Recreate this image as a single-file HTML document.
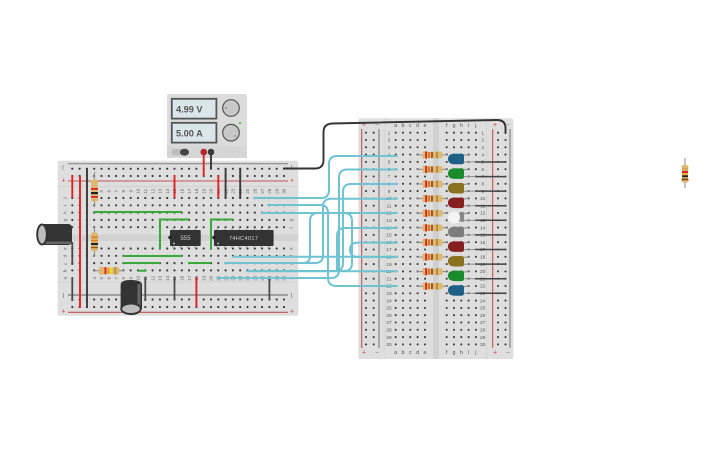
<!DOCTYPE html>
<html><head><meta charset="utf-8"><style>
html,body{margin:0;padding:0;background:#fff;width:725px;height:453px;overflow:hidden}
svg{display:block;filter:blur(.3px)}
text{font-family:"Liberation Sans",sans-serif}
.n{font-size:4.6px;fill:#666;text-anchor:middle;transform-box:fill-box;transform-origin:center;transform:rotate(-90deg)}
.l{font-size:5.5px;fill:#555;text-anchor:middle}
.m{font-size:4.8px;fill:#555;text-anchor:middle}
.d{fill:none;stroke:#3c3c3c;stroke-width:2.2;stroke-linecap:round;stroke-dasharray:0 7.3}
.w{fill:none;stroke:#6fc3d2;stroke-width:2;stroke-linecap:round}
.g{fill:none;stroke:#3aa83a;stroke-width:2}
.r{fill:none;stroke:#e02222;stroke-width:1.9}
.k{fill:none;stroke:#3a3a3a;stroke-width:1.9}
</style></head><body>
<svg width="725" height="453" viewBox="0 0 725 453" xmlns="http://www.w3.org/2000/svg">
<defs>
<g id="res">
<line x1="417" x2="447" y1="0" y2="0" stroke="#8d8d8d" stroke-width="1.1"/>
<path d="M423 -3.5 Q426 -4 428 -3 H436 Q439 -4 442 -3 Q443.5 0 442 3 Q439 4 436 3 H428 Q426 4 423 3.5 Q421.5 0 423 -3.5Z" fill="#dcb870"/>
<rect x="425.2" y="-3.6" width="1.8" height="7.2" fill="#e02020"/>
<rect x="428.2" y="-3.1" width="1.6" height="6.2" fill="#d06a20"/>
<rect x="431.2" y="-3.1" width="1.6" height="6.2" fill="#a03a20"/>
<rect x="436.2" y="-3.4" width="1.6" height="6.8" fill="#a98238"/>
</g>
<g id="ledl">
<path d="M463 -3.6 L468.6 -4.4 M463 3 L476 2.9" stroke="#8d8d8d" stroke-width="1" fill="none"/>
</g>
</defs>

<!-- power supply -->
<rect x="167" y="94" width="80" height="64" rx="2" fill="#dcdcdc"/>
<rect x="167" y="146" width="80" height="12" rx="1" fill="#d6d6d6"/>
<rect x="171.8" y="98.8" width="44.6" height="19.8" fill="#dbe6ea" stroke="#555" stroke-width="1.8"/>
<rect x="171.8" y="122.8" width="44.6" height="19.8" fill="#dbe6ea" stroke="#555" stroke-width="1.8"/>
<text x="176" y="112.5" font-size="9.2" font-weight="bold" fill="#555">4.99 V</text>
<text x="176" y="136.5" font-size="9.2" font-weight="bold" fill="#555">5.00 A</text>
<circle cx="231" cy="108" r="8.3" fill="#c8c8c8" stroke="#555" stroke-width="1.2"/>
<circle cx="231" cy="132.7" r="8.3" fill="#c8c8c8" stroke="#555" stroke-width="1.2"/>
<circle cx="226" cy="108" r=".7" fill="#666"/><circle cx="235" cy="136" r=".7" fill="#666"/>
<circle cx="240" cy="123" r="1.2" fill="#5fc85f"/>
<rect x="171.5" y="149" width="17.5" height="6.4" rx="3.2" fill="#bcbcbc"/>
<ellipse cx="184.5" cy="152.2" rx="4.5" ry="3.4" fill="#444"/>
<text x="229" y="154" font-size="4.5" fill="#c8c8c8">227 #</text>

<!-- left board -->
<rect x="57.7" y="160.7" width="240.6" height="155" rx="2" fill="#dedede"/>
<rect x="57.7" y="234.5" width="240.6" height="6.5" fill="#d2d2d2"/>
<rect x="57.7" y="186" width="240.6" height=".8" fill="#cfcfcf"/>
<rect x="57.7" y="281.5" width="240.6" height=".8" fill="#cfcfcf"/>
<line x1="68" x2="288" y1="163.7" y2="163.7" stroke="#8a8a8a" stroke-width="1.2"/>
<line x1="68" x2="288" y1="181" y2="181" stroke="#c05555" stroke-width="1.1"/>
<line x1="68" x2="288" y1="295" y2="295" stroke="#8a8a8a" stroke-width="1.6"/>
<line x1="68" x2="288" y1="312.3" y2="312.3" stroke="#c05555" stroke-width="1.1"/>
<text class="l" x="63" y="169" fill="#555">|</text><text class="l" x="291.5" y="169">|</text>
<text x="63.5" y="182.5" font-size="7" fill="#d04040" text-anchor="middle">+</text><text x="292" y="182.5" font-size="7" fill="#d04040" text-anchor="middle">+</text>
<text class="l" x="63.5" y="297">|</text><text class="l" x="291.5" y="297">|</text>
<text x="63.5" y="313.5" font-size="7" fill="#d04040" text-anchor="middle">+</text><text x="292" y="313.5" font-size="7" fill="#d04040" text-anchor="middle">+</text>
<g>
<text class="n" x="65" y="200">j</text><text class="n" x="65" y="207">i</text><text class="n" x="65" y="214">h</text><text class="n" x="65" y="221.5">g</text><text class="n" x="65" y="229">f</text>
<text class="n" x="65" y="250">e</text><text class="n" x="65" y="257.5">d</text><text class="n" x="65" y="265">c</text><text class="n" x="65" y="272">b</text><text class="n" x="65" y="279.5">a</text>
<text class="n" x="291" y="200">j</text><text class="n" x="291" y="207">i</text><text class="n" x="291" y="214">h</text><text class="n" x="291" y="221.5">g</text><text class="n" x="291" y="229">f</text>
<text class="n" x="291" y="250">e</text><text class="n" x="291" y="257.5">d</text><text class="n" x="291" y="265">c</text><text class="n" x="291" y="272">b</text><text class="n" x="291" y="279.5">a</text>
</g>
<path class="d" d="M72.3 168.7H284.1M72.3 176H284.1M72.3 198H284.1M72.3 205.3H284.1M72.3 212.6H284.1M72.3 219.9H284.1M72.3 227.2H284.1M72.3 248.5H284.1M72.3 255.8H284.1M72.3 263.1H284.1M72.3 270.4H284.1M72.3 299.5H284.1M72.3 307H284.1"/>
<g>
<text class="n" x="101.5" y="192.5">5</text><text class="n" x="108.8" y="192.5">6</text><text class="n" x="116.1" y="192.5">7</text><text class="n" x="123.4" y="192.5">8</text><text class="n" x="130.7" y="192.5">9</text><text class="n" x="138" y="192.5">10</text><text class="n" x="145.3" y="192.5">11</text><text class="n" x="152.6" y="192.5">12</text><text class="n" x="159.9" y="192.5">13</text><text class="n" x="167.2" y="192.5">14</text><text class="n" x="174.5" y="192.5">15</text><text class="n" x="181.8" y="192.5">16</text><text class="n" x="189.1" y="192.5">17</text><text class="n" x="196.4" y="192.5">18</text><text class="n" x="203.7" y="192.5">19</text><text class="n" x="211" y="192.5">20</text><text class="n" x="218.3" y="192.5">21</text><text class="n" x="225.6" y="192.5">22</text><text class="n" x="232.9" y="192.5">23</text><text class="n" x="240.2" y="192.5">24</text><text class="n" x="247.5" y="192.5">25</text><text class="n" x="254.8" y="192.5">26</text><text class="n" x="262.1" y="192.5">27</text><text class="n" x="269.4" y="192.5">28</text><text class="n" x="276.7" y="192.5">29</text><text class="n" x="284" y="192.5">30</text>
<text class="n" x="94.2" y="279.5">4</text><text class="n" x="101.5" y="279.5">5</text><text class="n" x="108.8" y="279.5">6</text><text class="n" x="116.1" y="279.5">7</text><text class="n" x="123.4" y="279.5">8</text><text class="n" x="130.7" y="279.5">9</text><text class="n" x="138" y="279.5">10</text><text class="n" x="145.3" y="279.5">11</text><text class="n" x="152.6" y="279.5">12</text><text class="n" x="159.9" y="279.5">13</text><text class="n" x="167.2" y="279.5">14</text><text class="n" x="174.5" y="279.5">15</text><text class="n" x="181.8" y="279.5">16</text><text class="n" x="189.1" y="279.5">17</text><text class="n" x="196.4" y="279.5">18</text><text class="n" x="203.7" y="279.5">19</text><text class="n" x="211" y="279.5">20</text><text class="n" x="218.3" y="279.5">21</text><text class="n" x="225.6" y="279.5">22</text><text class="n" x="232.9" y="279.5">23</text><text class="n" x="240.2" y="279.5">24</text><text class="n" x="247.5" y="279.5">25</text><text class="n" x="254.8" y="279.5">26</text><text class="n" x="262.1" y="279.5">27</text><text class="n" x="269.4" y="279.5">28</text><text class="n" x="276.7" y="279.5">29</text><text class="n" x="284" y="279.5">30</text>
</g>

<!-- right board -->
<rect x="358.3" y="118.3" width="155" height="240.7" rx="2" fill="#dedede"/>
<rect x="433" y="118.3" width="6" height="240.7" fill="#d0d0d0"/>
<rect x="384.5" y="118.3" width=".8" height="240.7" fill="#d2d2d2"/>
<rect x="486" y="118.3" width=".8" height="240.7" fill="#d2d2d2"/>
<line x1="361.7" x2="361.7" y1="129" y2="348" stroke="#c05555" stroke-width="1.1"/>
<line x1="379" x2="379" y1="129" y2="348" stroke="#8a8a8a" stroke-width="1.3"/>
<line x1="492.7" x2="492.7" y1="129" y2="348" stroke="#c05555" stroke-width="1.1"/>
<line x1="510" x2="510" y1="129" y2="348" stroke="#8a8a8a" stroke-width="1.3"/>
<path class="d" d="M366 132.7V344.5M373.7 132.7V344.5M395.7 132.7V344.5M403 132.7V344.5M410.3 132.7V344.5M417.6 132.7V344.5M425 132.7V344.5M446.7 132.7V344.5M454 132.7V344.5M461.3 132.7V344.5M468.6 132.7V344.5M475.9 132.7V344.5M498 132.7V344.5M505.5 132.7V344.5" style="stroke-width:2.1"/>
<g>
<text x="364" y="127" font-size="7" fill="#d04040" text-anchor="middle">+</text><text class="l" x="377" y="126">–</text><text x="495" y="127" font-size="7" fill="#d04040" text-anchor="middle">+</text><text class="l" x="508" y="126">–</text>
<text x="364" y="354.5" font-size="7" fill="#d04040" text-anchor="middle">+</text><text class="l" x="377" y="354">–</text><text x="495" y="354.5" font-size="7" fill="#d04040" text-anchor="middle">+</text><text class="l" x="508" y="354">–</text>
<text class="l" x="395.7" y="127">a</text><text class="l" x="403" y="127">b</text><text class="l" x="410.3" y="127">c</text><text class="l" x="417.6" y="127">d</text><text class="l" x="425" y="127">e</text><text class="l" x="446.7" y="127">f</text><text class="l" x="454" y="127">g</text><text class="l" x="461.3" y="127">h</text><text class="l" x="468.6" y="127">i</text><text class="l" x="475.9" y="127">j</text>
<text class="l" x="395.7" y="354">a</text><text class="l" x="403" y="354">b</text><text class="l" x="410.3" y="354">c</text><text class="l" x="417.6" y="354">d</text><text class="l" x="425" y="354">e</text><text class="l" x="446.7" y="354">f</text><text class="l" x="454" y="354">g</text><text class="l" x="461.3" y="354">h</text><text class="l" x="468.6" y="354">i</text><text class="l" x="475.9" y="354">j</text>
</g>
<g>
<text class="m" x="389" y="134.4">1</text><text class="m" x="389" y="141.7">2</text><text class="m" x="389" y="149">3</text><text class="m" x="389" y="156.3">4</text><text class="m" x="389" y="163.6">5</text><text class="m" x="389" y="170.9">6</text><text class="m" x="389" y="178.2">7</text><text class="m" x="389" y="185.5">8</text><text class="m" x="389" y="192.8">9</text><text class="m" x="389" y="200.1">10</text><text class="m" x="389" y="207.4">11</text><text class="m" x="389" y="214.7">12</text><text class="m" x="389" y="222">13</text><text class="m" x="389" y="229.3">14</text><text class="m" x="389" y="236.6">15</text><text class="m" x="389" y="243.9">16</text><text class="m" x="389" y="251.2">17</text><text class="m" x="389" y="258.5">18</text><text class="m" x="389" y="265.8">19</text><text class="m" x="389" y="273.1">20</text><text class="m" x="389" y="280.4">21</text><text class="m" x="389" y="287.7">22</text><text class="m" x="389" y="295">23</text><text class="m" x="389" y="302.3">24</text><text class="m" x="389" y="309.6">25</text><text class="m" x="389" y="316.9">26</text><text class="m" x="389" y="324.2">27</text><text class="m" x="389" y="331.5">28</text><text class="m" x="389" y="338.8">29</text><text class="m" x="389" y="346.1">30</text>
<text class="m" x="482.7" y="134.4">1</text><text class="m" x="482.7" y="141.7">2</text><text class="m" x="482.7" y="149">3</text><text class="m" x="482.7" y="156.3">4</text><text class="m" x="482.7" y="163.6">5</text><text class="m" x="482.7" y="170.9">6</text><text class="m" x="482.7" y="178.2">7</text><text class="m" x="482.7" y="185.5">8</text><text class="m" x="482.7" y="192.8">9</text><text class="m" x="482.7" y="200.1">10</text><text class="m" x="482.7" y="207.4">11</text><text class="m" x="482.7" y="214.7">12</text><text class="m" x="482.7" y="222">13</text><text class="m" x="482.7" y="229.3">14</text><text class="m" x="482.7" y="236.6">15</text><text class="m" x="482.7" y="243.9">16</text><text class="m" x="482.7" y="251.2">17</text><text class="m" x="482.7" y="258.5">18</text><text class="m" x="482.7" y="265.8">19</text><text class="m" x="482.7" y="273.1">20</text><text class="m" x="482.7" y="280.4">21</text><text class="m" x="482.7" y="287.7">22</text><text class="m" x="482.7" y="295">23</text><text class="m" x="482.7" y="302.3">24</text><text class="m" x="482.7" y="309.6">25</text><text class="m" x="482.7" y="316.9">26</text><text class="m" x="482.7" y="324.2">27</text><text class="m" x="482.7" y="331.5">28</text><text class="m" x="482.7" y="338.8">29</text><text class="m" x="482.7" y="346.1">30</text>
</g>

<!-- chips -->
<path d="M173 228.5v2M180.3 228.5v2M187.6 228.5v2M195 228.5v2M173 246v2M180.3 246v2M187.6 246v2M195 246v2M217 228.5v2M224.5 228.5v2M232 228.5v2M239 228.5v2M246.5 228.5v2M254 228.5v2M261 228.5v2M268.5 228.5v2M217 246v2M224.5 246v2M232 246v2M239 246v2M246.5 246v2M254 246v2M261 246v2M268.5 246v2" stroke="#aaa" stroke-width="1.4"/>
<rect x="170" y="230" width="30.7" height="16" rx="1" fill="#333"/>
<rect x="214" y="230" width="59.6" height="16" rx="1" fill="#333"/>
<circle cx="170" cy="237.5" r="1.7" fill="#222"/><circle cx="214" cy="237.5" r="1.7" fill="#222"/>
<circle cx="174" cy="243.5" r=".9" fill="#ddd"/><circle cx="218" cy="243.5" r=".9" fill="#ddd"/>
<text x="185.5" y="240" font-size="6.2" fill="#cfcfcf" text-anchor="middle">555</text>
<text x="243.5" y="240" font-size="5.8" fill="#cfcfcf" text-anchor="middle" letter-spacing=".2">74HC4017</text>

<!-- green wires -->
<path class="g" d="M94 212H182M160 249V219.5H189M211 249V219.5H233.5M123 256H182M123 263H160M188 263H211M138 270.7H146.5"/>

<!-- left board wires -->
<path class="r" d="M72.3 175V198M174.5 175V198M218.3 175V198M203.7 150V176"/>
<path class="r" d="M80 176V308M196.4 277V307"/>
<path class="k" d="M87 168V308"/>
<path class="k" d="M225.6 168V198M240.2 168V198M211 151V168"/>
<path d="M72.3 242V265M72.3 277V301M145.3 277V301M174.5 277V300M269.4 277V300" fill="none" stroke="#4a4a4a" stroke-width="1.8"/>
<circle cx="203.7" cy="152" r="3.3" fill="#b8232a"/><circle cx="211" cy="152" r="3.3" fill="#3a3a3a"/>

<!-- left resistors -->
<line x1="94.5" x2="94.5" y1="172" y2="207" stroke="#8d8d8d" stroke-width="1.1"/>
<path d="M91 180.5Q94.5 178 98 180.5L97.8 186V196L98 200.5Q94.5 203 91 200.5L91.2 196V186Z" fill="#dcb870"/>
<rect x="91" y="188" width="7" height="1.8" fill="#e02020"/><rect x="91" y="192" width="7" height="2.2" fill="#222"/><rect x="91" y="196" width="7" height="1.8" fill="#e02020"/>
<line x1="94.5" x2="94.5" y1="227" y2="257" stroke="#8d8d8d" stroke-width="1.1"/>
<path d="M91 233.5Q94.5 231 98 233.5L97.8 238V247L98 250Q94.5 253 91 250L91.2 247V238Z" fill="#dcb870"/>
<rect x="91" y="236.5" width="7" height="1.6" fill="#d8841f"/><rect x="91" y="239.8" width="7" height="1.6" fill="#d8841f"/><rect x="91" y="243" width="7" height="2" fill="#222"/><rect x="91" y="246.8" width="7" height="1.4" fill="#8a5a20"/>
<line x1="94" x2="124" y1="270.7" y2="270.7" stroke="#8d8d8d" stroke-width="1.1"/>
<path d="M99.5 267Q97.5 270.7 99.5 274.5Q102 275 104 274H114Q116 275 118.5 274.5Q120.5 270.7 118.5 267Q116 266.5 114 267.5H104Q102 266.5 99.5 267Z" fill="#dcb870"/>
<rect x="104.5" y="267" width="1.8" height="7.4" fill="#e02020"/><rect x="107.5" y="267.4" width="1.7" height="6.6" fill="#f0a020"/><rect x="110.5" y="267.4" width="1.7" height="6.6" fill="#f0e020"/><rect x="114.5" y="267" width="1.5" height="7.4" fill="#b08a40"/>

<!-- capacitors -->
<path d="M42 224H68Q72 224 72 228V241Q72 245 68 245H42Z" fill="#333"/>
<path d="M44 241.5H71V244H44Z" fill="#666"/>
<ellipse cx="42" cy="234.5" rx="4.8" ry="10" fill="#bdbdbd" stroke="#333" stroke-width="1.9"/>
<path d="M120.6 285Q120.6 280 131 280Q142 280 142 285V309H120.6Z" fill="#333"/>
<path d="M137.5 284H140.5V308H137.5Z" fill="#666"/>
<ellipse cx="131" cy="308.8" rx="9.8" ry="5.2" fill="#bdbdbd" stroke="#333" stroke-width="1.9"/>

<!-- cyan wires -->
<path class="w" d="M254 198H321Q329 198 329 190V164Q329 156 337 156H397"/>
<path class="w" d="M268 205H320Q328 205 328 213V278Q328 286 337 286H397"/>
<path class="w" d="M397 169.5H347Q339 169.5 339 178V270Q339 278 331 278H217"/>
<path class="w" d="M397 184H351Q343 184 343 192V263Q343 271 335 271H247"/>
<path class="w" d="M397 198.8H331Q323 198.8 323 207V255Q323 263 315 263H225"/>
<path class="w" d="M225 263H303Q310 263 310 256V221Q310 213 318 213H344Q352 213 352 221V263Q352 271 344 271H300"/>
<path class="w" d="M262 213H397"/>
<path class="w" d="M397 228H345Q337 228 337 236V270"/>
<path class="w" d="M397 242.6H358Q350 242.6 350 249.5Q350 257 358 257H397"/>
<path class="w" d="M233 256.7H397"/>
<path class="w" d="M247 271.2H397"/>

<!-- black long wire -->
<path d="M284 168.5H315Q323.5 168.5 323.5 160V132Q323.5 124 332 123.5L497 120Q505.5 120 505.5 128V133" fill="none" stroke="#333" stroke-width="1.9" stroke-linecap="round"/>

<!-- output resistors -->
<use href="#res" y="155"/><use href="#res" y="169.4"/><use href="#res" y="184"/><use href="#res" y="198.6"/><use href="#res" y="213.2"/><use href="#res" y="227.8"/><use href="#res" y="242.4"/><use href="#res" y="257"/><use href="#res" y="271.6"/><use href="#res" y="286.2"/>

<!-- right black wires -->
<path d="M475.5 162H506M475.5 176.6H506M475.5 191.1H506M475.5 205.7H506M475.5 220.3H506M475.5 234.9H506M475.5 249.5H506M475.5 264.1H506M475.5 278.7H506M475.5 293.3H506" stroke="#444" stroke-width="1.5" fill="none"/>

<!-- LEDs -->
<use href="#ledl" y="159"/><use href="#ledl" y="173.6"/><use href="#ledl" y="188.2"/><use href="#ledl" y="202.8"/><use href="#ledl" y="217.4"/><use href="#ledl" y="232"/><use href="#ledl" y="246.6"/><use href="#ledl" y="261.2"/><use href="#ledl" y="275.8"/><use href="#ledl" y="290.4"/>
<g>
<path d="M448 159C448 155 451 153.8 455 153.8H461Q464 153.4 464 156V162Q464 164.6 461 164.3H455C451 164.3 448 163 448 159Z" fill="#1f6186"/>
<path d="M448 173.6C448 169.6 451 168.4 455 168.4H461Q464 168 464 170.6V176.6Q464 179.2 461 178.9H455C451 178.9 448 177.6 448 173.6Z" fill="#1b8a2c"/>
<path d="M448 188.2C448 184.2 451 183 455 183H461Q464 182.6 464 185.2V191.2Q464 193.8 461 193.5H455C451 193.5 448 192.2 448 188.2Z" fill="#8a7320"/>
<path d="M448 202.8C448 198.8 451 197.6 455 197.6H461Q464 197.2 464 199.8V205.8Q464 208.4 461 208.1H455C451 208.1 448 206.8 448 202.8Z" fill="#85201f"/>
<path d="M458 214L464 212L464 222L458 221Z" fill="#888"/>
<circle cx="454" cy="217.6" r="6" fill="#f4f4f4"/>
<path d="M448 232C448 228 451 226.8 455 226.8H461Q464 226.4 464 229V235Q464 237.6 461 237.3H455C451 237.3 448 236 448 232Z" fill="#7d7d7d"/>
<path d="M448 246.6C448 242.6 451 241.4 455 241.4H461Q464 241 464 243.6V249.6Q464 252.2 461 251.9H455C451 251.9 448 250.6 448 246.6Z" fill="#85201f"/>
<path d="M448 261.2C448 257.2 451 256 455 256H461Q464 255.6 464 258.2V264.2Q464 266.8 461 266.5H455C451 266.5 448 265.2 448 261.2Z" fill="#8a7320"/>
<path d="M448 275.8C448 271.8 451 270.6 455 270.6H461Q464 270.2 464 272.8V278.8Q464 281.4 461 281.1H455C451 281.1 448 279.8 448 275.8Z" fill="#1b8a2c"/>
<path d="M448 290.4C448 286.4 451 285.2 455 285.2H461Q464 284.8 464 287.4V293.4Q464 296 461 295.7H455C451 295.7 448 294.4 448 290.4Z" fill="#1f6186"/>
</g>

<!-- far right resistor -->
<line x1="685" x2="685" y1="158" y2="188" stroke="#a0a8b0" stroke-width="1.3"/>
<path d="M681.5 166Q685 163.5 688.5 166L688 170V178L688.5 181.5Q685 184 681.5 181.5L682 178V170Z" fill="#dcb870"/>
<rect x="681.8" y="168.5" width="6.4" height="1.4" fill="#c9a050"/>
<rect x="682" y="171" width="6" height="2" fill="#e02020"/><rect x="682" y="173.4" width="6" height="1.3" fill="#e8b020"/><rect x="682" y="175.3" width="6" height="1.8" fill="#222"/><rect x="681.6" y="178.5" width="6.8" height="1.8" fill="#8a4a20"/>
</svg>
</body></html>
